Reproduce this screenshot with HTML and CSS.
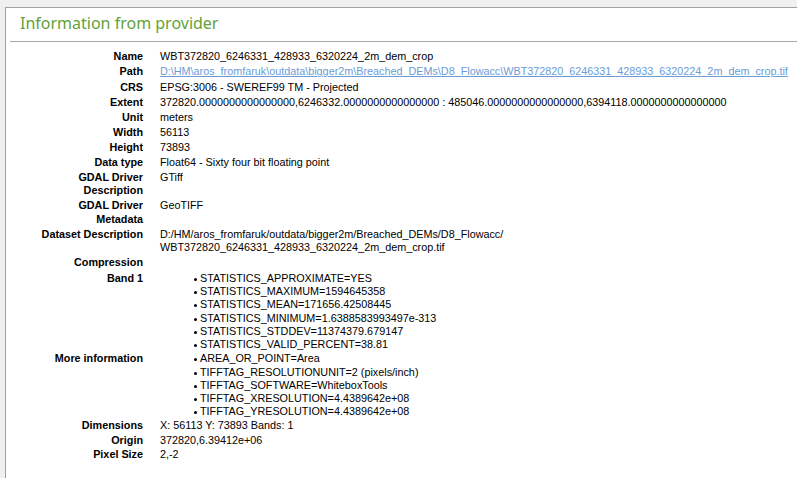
FILE: index.html
```html
<!DOCTYPE html>
<html>
<head>
<meta charset="utf-8">
<link rel="stylesheet" href="styles.css">
</head>
<body>
<div class="panel">
  <h1 class="title">Information from provider</h1>
  <div class="info">
    <div class="lbl">Name</div><div class="val">WBT372820_6246331_428933_6320224_2m_dem_crop</div>
    <div class="lbl">Path</div><div class="val"><a class="link" href="#">D:\HM\aros_fromfaruk\outdata\bigger2m\Breached_DEMs\D8_Flowacc\WBT372820_6246331_428933_6320224_2m_dem_crop.tif</a></div>
    <div class="lbl">CRS</div><div class="val">EPSG:3006 - SWEREF99 TM - Projected</div>
    <div class="lbl">Extent</div><div class="val">372820.0000000000000000,6246332.0000000000000000 : 485046.0000000000000000,6394118.0000000000000000</div>
    <div class="lbl">Unit</div><div class="val">meters</div>
    <div class="lbl">Width</div><div class="val">56113</div>
    <div class="lbl">Height</div><div class="val">73893</div>
    <div class="lbl">Data type</div><div class="val">Float64 - Sixty four bit floating point</div>
    <div class="lbl">GDAL Driver Description</div><div class="val">GTiff</div>
    <div class="lbl">GDAL Driver Metadata</div><div class="val">GeoTIFF</div>
    <div class="lbl">Dataset Description</div><div class="val">D:/HM/aros_fromfaruk/outdata/bigger2m/Breached_DEMs/D8_Flowacc/<br>WBT372820_6246331_428933_6320224_2m_dem_crop.tif</div>
    <div class="lbl">Compression</div><div class="val"></div>
    <div class="lbl band">Band 1</div>
    <div class="val band">
      <ul class="list">
        <li>STATISTICS_APPROXIMATE=YES</li>
        <li>STATISTICS_MAXIMUM=1594645358</li>
        <li>STATISTICS_MEAN=171656.42508445</li>
        <li>STATISTICS_MINIMUM=1.6388583993497e-313</li>
        <li>STATISTICS_STDDEV=11374379.679147</li>
        <li>STATISTICS_VALID_PERCENT=38.81</li>
      </ul>
    </div>
    <div class="lbl more">More information</div>
    <div class="val more">
      <ul class="list">
        <li>AREA_OR_POINT=Area</li>
        <li>TIFFTAG_RESOLUTIONUNIT=2 (pixels/inch)</li>
        <li>TIFFTAG_SOFTWARE=WhiteboxTools</li>
        <li>TIFFTAG_XRESOLUTION=4.4389642e+08</li>
        <li>TIFFTAG_YRESOLUTION=4.4389642e+08</li>
      </ul>
    </div>
    <div class="lbl tail">Dimensions</div><div class="val tail">X: 56113 Y: 73893 Bands: 1</div>
    <div class="lbl tail">Origin</div><div class="val tail">372820,6.39412e+06</div>
    <div class="lbl tail">Pixel Size</div><div class="val tail">2,-2</div>
  </div>
</div>
</body>
</html>
```
FILE: styles.css
```css
html, body {
  margin: 0;
  padding: 0;
  height: 100%;
  background: #f0f0f0;
  overflow: hidden;
}
body {
  padding: 7px 0 0 5px;
  box-sizing: border-box;
  font-family: "Liberation Sans", Arial, sans-serif;
  font-size: 10.8px;
  color: #000;
}
.panel {
  background: #fff;
  border-top: 1px solid #a0a0a0;
  border-left: 1px solid #a0a0a0;
  height: 100%;
  box-sizing: border-box;
  padding-left: 4px;
}
.title {
  margin: 0;
  padding: 3.5px 0 7.5px 10px;
  font-family: "Noto Sans", "Open Sans", sans-serif;
  font-size: 16px;
  font-weight: 400;
  line-height: 22px;
  color: #62a23a;
  border-bottom: 1px solid #a8a8a8;
}
.info {
  display: grid;
  grid-template-columns: 110px 1fr;
  column-gap: 17px;
  margin: 7.5px 0 0 23px;
  line-height: 13.3px;
}
.lbl, .val {
  padding: 0.9px 0;
  white-space: nowrap;
}
.lbl {
  font-weight: 700;
  text-align: right;
  white-space: normal;
}
.band {
  padding: 1.4px 0 0;
}
.more {
  padding: 0.8px 0 0;
}
.tail {
  padding: 0.6px 0;
}
.link {
  color: #6c9bd6;
  text-decoration: underline;
}
.list {
  margin: 0;
  padding-left: 40px;
  list-style: none;
}
.list li {
  position: relative;
}
.list li::before {
  content: "";
  position: absolute;
  left: -6px;
  top: 6px;
  width: 3px;
  height: 3px;
  border-radius: 50%;
  background: #000;
}
```
